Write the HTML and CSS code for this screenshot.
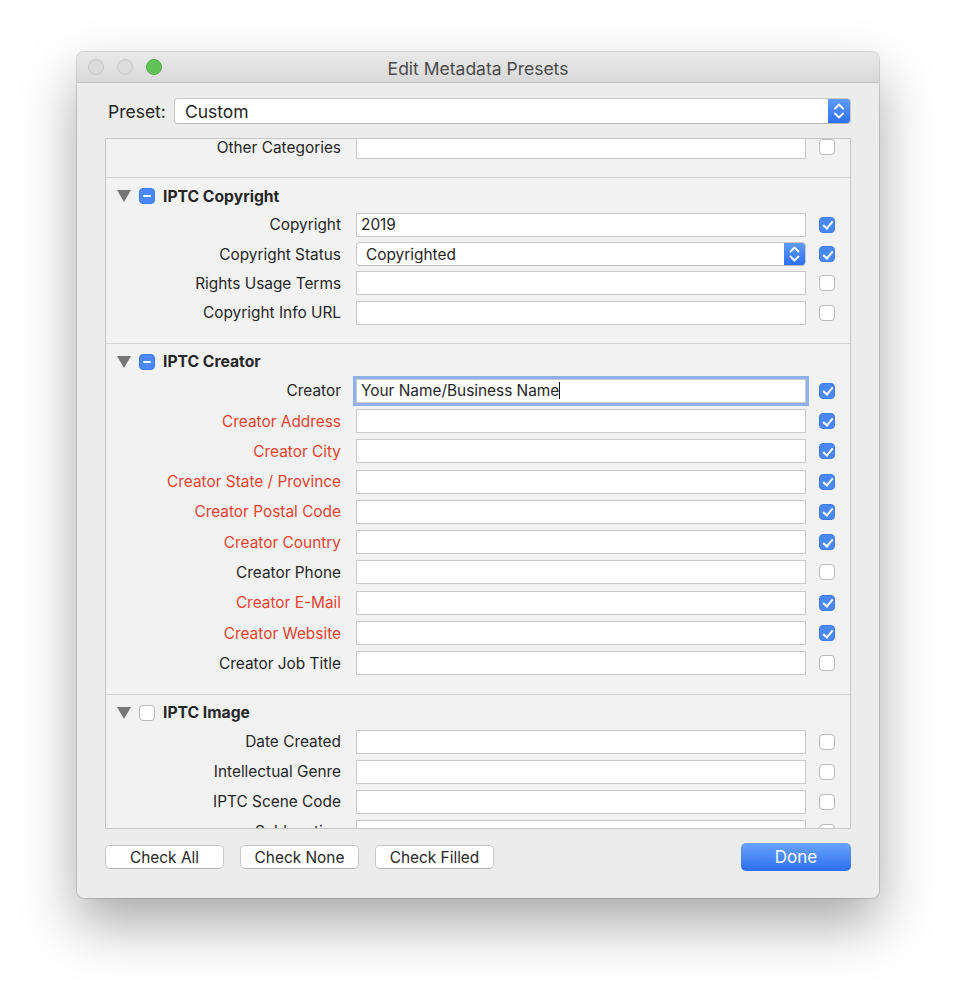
FILE: index.html
```html
<!DOCTYPE html>
<html lang="en">

<head>
    <meta charset="UTF-8">
    <title>Edit Metadata Presets</title>
    <link rel="stylesheet" href="styles.css">
</head>

<body>
    <div class="window">
        <div class="titlebar">
            <div class="lights">
                <span class="light"></span>
                <span class="light"></span>
                <span class="light green"></span>
            </div>
            <div class="title">Edit Metadata Presets</div>
        </div>

        <div class="content">
            <div class="preset-row">
                <span class="preset-label">Preset:</span>
                <div class="select big">
                    <span class="select-text">Custom</span>
                    <span class="stepper">
                        <svg width="22" height="26" viewBox="0 0 22 26"><path d="M7 10.5 L11 6.5 L15 10.5 M7 15.5 L11 19.5 L15 15.5" fill="none" stroke="#fff" stroke-width="1.8" stroke-linecap="round" stroke-linejoin="round"/></svg>
                    </span>
                </div>
            </div>

            <div class="panel">
                <div class="scroll">
                    <div class="section first">
                        <div class="row">
                            <label>Other Categories</label>
                            <div class="field"></div>
                            <span class="check"></span>
                        </div>
                    </div>

                    <div class="section copyright">
                        <div class="section-head">
                            <span class="triangle"></span>
                            <span class="check mixed"></span>
                            <span class="section-title">IPTC Copyright</span>
                        </div>
                        <div class="row">
                            <label>Copyright</label>
                            <div class="field">2019</div>
                            <span class="check on"></span>
                        </div>
                        <div class="row">
                            <label>Copyright Status</label>
                            <div class="select small">
                                <span class="select-text">Copyrighted</span>
                                <span class="stepper">
                                    <svg width="21" height="24" viewBox="0 0 21 24"><path d="M6.5 9.5 L10.5 5.5 L14.5 9.5 M6.5 14.5 L10.5 18.5 L14.5 14.5" fill="none" stroke="#fff" stroke-width="1.8" stroke-linecap="round" stroke-linejoin="round"/></svg>
                                </span>
                            </div>
                            <span class="check on"></span>
                        </div>
                        <div class="row">
                            <label>Rights Usage Terms</label>
                            <div class="field"></div>
                            <span class="check"></span>
                        </div>
                        <div class="row">
                            <label>Copyright Info URL</label>
                            <div class="field"></div>
                            <span class="check"></span>
                        </div>
                    </div>

                    <div class="section creator">
                        <div class="section-head">
                            <span class="triangle"></span>
                            <span class="check mixed"></span>
                            <span class="section-title">IPTC Creator</span>
                        </div>
                        <div class="row">
                            <label>Creator</label>
                            <div class="field focus">Your Name/Business Name<span class="caret"></span></div>
                            <span class="check on"></span>
                        </div>
                        <div class="row">
                            <label class="req">Creator Address</label>
                            <div class="field"></div>
                            <span class="check on"></span>
                        </div>
                        <div class="row">
                            <label class="req">Creator City</label>
                            <div class="field"></div>
                            <span class="check on"></span>
                        </div>
                        <div class="row">
                            <label class="req">Creator State / Province</label>
                            <div class="field"></div>
                            <span class="check on"></span>
                        </div>
                        <div class="row">
                            <label class="req">Creator Postal Code</label>
                            <div class="field"></div>
                            <span class="check on"></span>
                        </div>
                        <div class="row">
                            <label class="req">Creator Country</label>
                            <div class="field"></div>
                            <span class="check on"></span>
                        </div>
                        <div class="row">
                            <label>Creator Phone</label>
                            <div class="field"></div>
                            <span class="check"></span>
                        </div>
                        <div class="row">
                            <label class="req">Creator E-Mail</label>
                            <div class="field"></div>
                            <span class="check on"></span>
                        </div>
                        <div class="row">
                            <label class="req">Creator Website</label>
                            <div class="field"></div>
                            <span class="check on"></span>
                        </div>
                        <div class="row">
                            <label>Creator Job Title</label>
                            <div class="field"></div>
                            <span class="check"></span>
                        </div>
                    </div>

                    <div class="section">
                        <div class="section-head">
                            <span class="triangle"></span>
                            <span class="check"></span>
                            <span class="section-title">IPTC Image</span>
                        </div>
                        <div class="row">
                            <label>Date Created</label>
                            <div class="field"></div>
                            <span class="check"></span>
                        </div>
                        <div class="row">
                            <label>Intellectual Genre</label>
                            <div class="field"></div>
                            <span class="check"></span>
                        </div>
                        <div class="row">
                            <label>IPTC Scene Code</label>
                            <div class="field"></div>
                            <span class="check"></span>
                        </div>
                        <div class="row">
                            <label>Sublocation</label>
                            <div class="field"></div>
                            <span class="check"></span>
                        </div>
                    </div>
                </div>
            </div>

            <div class="button-row">
                <button class="btn">Check All</button>
                <button class="btn">Check None</button>
                <button class="btn">Check Filled</button>
                <button class="btn primary">Done</button>
            </div>
        </div>
    </div>
</body>

</html>
```

FILE: styles.css
```css
html {
    min-height: 1000px;
    background: #ffffff;
}

body {
    margin: 0;
    min-height: 1000px;
    padding: 52px 0 0 77px;
    box-sizing: border-box;
    font-family: "Inter", "Noto Sans", sans-serif;
    color: #262626;
}

.window {
    width: 802px;
    height: 846px;
    background: #ececec;
    border-radius: 7px;
    box-shadow: 0 0 0 1px rgba(0, 0, 0, 0.14), 0 26px 55px rgba(0, 0, 0, 0.34);
    overflow: hidden;
}

.titlebar {
    height: 30px;
    background: linear-gradient(#e9e9e9, #d9d9d9);
    border-bottom: 1px solid #c2c2c2;
    display: flex;
    align-items: center;
    position: relative;
}

.lights {
    display: flex;
    gap: 13px;
    padding-left: 11px;
}

.light {
    width: 14px;
    height: 14px;
    border-radius: 50%;
    background: #dcdcdc;
    border: 1px solid #c6c6c6;
}

.light.green {
    background: #5fc455;
    border-color: #4fae42;
}

.title {
    position: absolute;
    left: 0;
    right: 0;
    top: 6px;
    text-align: center;
    font-size: 17.5px;
    color: #4b4b4b;
    pointer-events: none;
}

.content {
    padding: 15px 28px 0 28px;
}

.preset-row {
    display: flex;
    align-items: center;
    height: 26px;
}

.preset-label {
    font-size: 17.5px;
    margin: 0 8px 0 3px;
}

.select {
    display: flex;
    align-items: center;
    background: #fff;
    border: 1px solid #c9c9c9;
    border-bottom-color: #b9b9b9;
    border-radius: 4px;
    box-sizing: border-box;
    overflow: hidden;
}

.select.big {
    flex: 1;
    height: 26px;
    font-size: 17.5px;
}

.select.small {
    width: 450px;
    height: 24px;
    margin-left: 15px;
    font-size: 15.4px;
}

.select-text {
    flex: 1;
    padding-left: 10px;
}

.select.small .select-text {
    padding-left: 9px;
}

.stepper {
    align-self: stretch;
    display: flex;
    align-items: center;
    justify-content: center;
    background: linear-gradient(#5d9cf8, #2f6ff0);
}

.panel {
    margin-top: 14px;
    height: 689px;
    border: 1px solid #c8c8c8;
    background: #f2f2f2;
    overflow: hidden;
}

.scroll {
    margin-top: -7px;
}

.section {
    border-top: 1px solid #d3d3d3;
    padding-bottom: 15px;
}

.section.first {
    border-top: none;
}

.section-head {
    display: flex;
    align-items: center;
    height: 24px;
    padding: 6px 0 2px 11px;
}

.triangle {
    width: 0;
    height: 0;
    border-left: 7px solid transparent;
    border-right: 7px solid transparent;
    border-top: 12px solid #767676;
    margin-right: 8px;
}

.section-title {
    font-size: 15.7px;
    font-weight: 700;
    margin-left: 8px;
}

.row {
    display: flex;
    align-items: center;
    height: 30px;
    font-size: 15.4px;
}

.copyright .row {
    height: 29.4px;
}

.creator .row {
    height: 30.3px;
}

.row label {
    width: 235px;
    text-align: right;
}

.row label.req {
    color: #e5432f;
}

.field {
    width: 450px;
    height: 24px;
    margin-left: 15px;
    box-sizing: border-box;
    background: #fff;
    border: 1px solid #c9c9c9;
    padding: 0 4px;
    display: flex;
    align-items: center;
}

.field.focus {
    box-shadow: 0 0 0 3px #8eb2ee;
}

.caret {
    width: 1px;
    height: 17px;
    background: #111;
}

.check {
    width: 16px;
    height: 16px;
    box-sizing: border-box;
    border: 1px solid #b9b9b9;
    border-radius: 4px;
    background: #fff;
    position: relative;
}

.row .check {
    margin-left: 13px;
}

.check.on,
.check.mixed {
    background: #4a88f5;
    border-color: #3f7ceb;
}

.check.on::after {
    content: "";
    position: absolute;
    left: 5px;
    top: 1.5px;
    width: 4px;
    height: 8px;
    border: solid #fff;
    border-width: 0 2px 2px 0;
    transform: rotate(40deg);
}

.check.mixed::after {
    content: "";
    position: absolute;
    left: 3px;
    right: 3px;
    top: 6px;
    height: 2px;
    background: #fff;
    border-radius: 1px;
}

.button-row {
    display: flex;
    align-items: center;
    gap: 16px;
    margin-top: 14px;
}

.btn {
    width: 119px;
    height: 24px;
    font-family: inherit;
    font-size: 15.4px;
    color: #262626;
    background: #fff;
    border: 1px solid #c8c8c8;
    border-bottom-color: #b4b4b4;
    border-radius: 5px;
    padding: 0;
}

.btn.primary {
    margin-left: auto;
    width: 110px;
    height: 28px;
    font-size: 17px;
    color: #fff;
    border: none;
    background: linear-gradient(#6aa4fb, #2c6ef0);
}
```
